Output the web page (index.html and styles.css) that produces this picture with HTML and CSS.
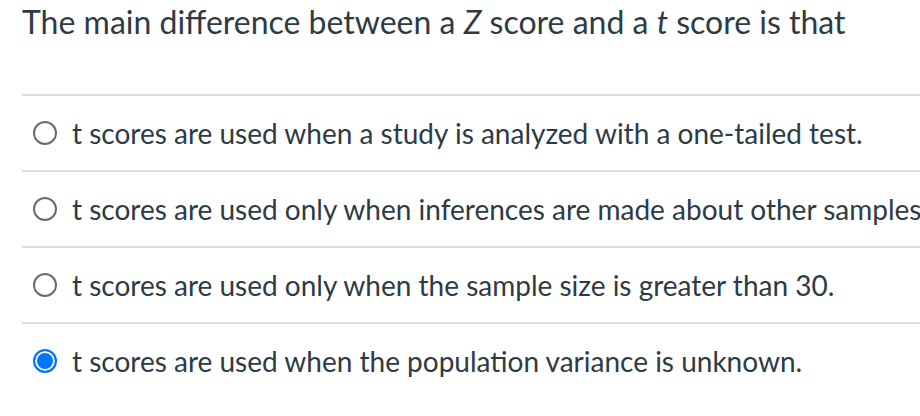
FILE: index.html
```html
<!DOCTYPE html>
<html>
<head>
<meta charset="utf-8">
<link rel="stylesheet" href="styles.css">
</head>
<body>
<div class="question">
  <h1 class="title">The main difference between a <em>Z</em> score and a <em>t</em> score is that</h1>
  <div class="answers">
    <label class="answer"><span class="radio"></span><span class="text">t scores are used when a study is analyzed with a one-tailed test.</span></label>
    <label class="answer"><span class="radio"></span><span class="text">t scores are used only when inferences are made about other samples.</span></label>
    <label class="answer"><span class="radio"></span><span class="text">t scores are used only when the sample size is greater than 30.</span></label>
    <label class="answer"><span class="radio checked"></span><span class="text">t scores are used when the population variance is unknown.</span></label>
  </div>
</div>
</body>
</html>
```

FILE: styles.css
```css
html, body {
  margin: 0;
  padding: 0;
  background: #fff;
  overflow: hidden;
}
body {
  font-family: Lato, "Open Sans", sans-serif;
  color: #2d3b45;
  width: 920px;
  height: 416px;
}
.question {
  padding-left: 22px;
}
.title {
  margin: 0;
  padding-top: 2px;
  font-size: 32px;
  font-weight: 400;
  line-height: 40px;
  height: 92px;
  white-space: nowrap;
}
.title em {
  font-style: italic;
}
.answer {
  display: flex;
  align-items: center;
  height: 74px;
  border-top: 2px solid #dcdcdc;
  white-space: nowrap;
}
.radio {
  box-sizing: border-box;
  width: 24px;
  height: 24px;
  margin-left: 11px;
  margin-right: 15px;
  border: 2px solid #6b6b6b;
  border-radius: 50%;
  flex: none;
}
.radio.checked {
  border: 2px solid #0374ff;
  background: #0374ff;
  box-shadow: inset 0 0 0 2px #fff;
}
.text {
  font-size: 28px;
}
```
